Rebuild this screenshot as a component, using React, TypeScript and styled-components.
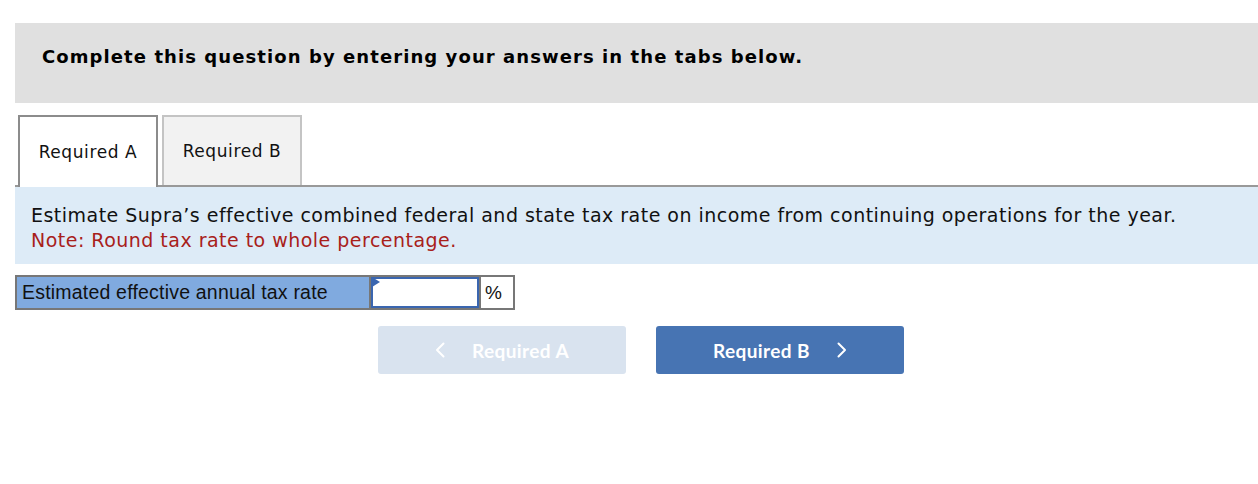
import React from "react";
import styled, { createGlobalStyle } from "styled-components";

const GlobalStyle = createGlobalStyle`
  body {
    margin: 0;
    background: #ffffff;
    font-family: "DejaVu Sans", Verdana, sans-serif;
  }
`;

const Page = styled.div`
  padding: 23px 0 0 15px;
  width: 1243px;
`;

const Banner = styled.div`
  background: #e0e0e0;
  height: 80px;
  box-sizing: border-box;
  padding: 22px 0 0 27px;
  line-height: 24px;
  font-weight: bold;
  font-size: 18px;
  letter-spacing: 1.08px;
  color: #000;
`;

const TabBar = styled.div`
  display: flex;
  gap: 4px;
  margin-top: 12px;
  padding-left: 3px;
  border-bottom: 2px solid #999;
`;

const Tab = styled.div<{ $active?: boolean }>`
  width: 140px;
  box-sizing: border-box;
  display: flex;
  align-items: center;
  justify-content: center;
  font-size: 17px;
  letter-spacing: 0.6px;
  color: #111;
  background: ${(p) => (p.$active ? "#ffffff" : "#f2f2f2")};
  border: 2px solid ${(p) => (p.$active ? "#8c8c8c" : "#c4c4c4")};
  border-bottom: none;
  margin-bottom: ${(p) => (p.$active ? "-2px" : "0")};
  height: ${(p) => (p.$active ? "72px" : "70px")};
`;

const Prompt = styled.div`
  background: #ddebf7;
  height: 77px;
  box-sizing: border-box;
  padding: 16px 16px 0;
  font-size: 19px;
  letter-spacing: 0.48px;
  line-height: 25px;
  color: #111;
  white-space: nowrap;
`;

const Note = styled.div`
  color: #a8201a;
`;

const AnswerRow = styled.div`
  display: flex;
  margin-top: 11px;
  width: 500px;
  height: 35px;
  box-sizing: border-box;
  border: 2px solid #777;
  font-family: "Liberation Sans", Arial, sans-serif;
`;

const Label = styled.div`
  width: 354px;
  flex: none;
  box-sizing: border-box;
  background: #80aadf;
  border-right: 2px solid #777;
  display: flex;
  align-items: center;
  padding-left: 5px;
  font-size: 19.5px;
  letter-spacing: 0.2px;
  color: #111;
  white-space: nowrap;
  overflow: hidden;
`;

const InputCell = styled.div`
  position: relative;
  width: 110px;
  flex: none;
  box-sizing: border-box;
  border-right: 2px solid #777;
  display: flex;
`;

const Input = styled.input`
  flex: 1;
  min-width: 0;
  border: 2px solid #3a66b0;
  outline: none;
  margin: 0;
  padding: 0 4px;
  background: #fff;
`;

const Flag = styled.span`
  position: absolute;
  top: 0;
  left: 1px;
  width: 0;
  height: 0;
  border-top: 5px solid transparent;
  border-bottom: 5px solid transparent;
  border-left: 8px solid #3a66b0;
`;

const Unit = styled.div`
  flex: 1;
  display: flex;
  align-items: center;
  padding-left: 4px;
  font-size: 19px;
  background: #fff;
  color: #111;
`;

const Nav = styled.div`
  display: flex;
  gap: 30px;
  margin: 16px 0 0 363px;
`;

const NavButton = styled.button<{ $disabled?: boolean }>`
  width: 248px;
  height: 48px;
  border: none;
  border-radius: 3px;
  background: ${(p) => (p.$disabled ? "#d9e3ef" : "#4774b3")};
  color: #fff;
  font-family: Lato, "Open Sans", sans-serif;
  font-weight: bold;
  font-size: 19px;
  letter-spacing: 0.4px;
  display: flex;
  align-items: center;
  justify-content: center;
  gap: 27px;
  cursor: ${(p) => (p.$disabled ? "default" : "pointer")};
  padding: 0;
`;

const Chevron = ({ dir }: { dir: "left" | "right" }) => (
  <svg width="10" height="16" viewBox="0 0 10 16" fill="none">
    <path
      d={dir === "left" ? "M8.5 1.5 L2 8 L8.5 14.5" : "M1.5 1.5 L8 8 L1.5 14.5"}
      stroke="#fff"
      strokeWidth="2"
      strokeLinecap="round"
      strokeLinejoin="round"
    />
  </svg>
);

export default function App() {
  return (
    <>
      <GlobalStyle />
      <Page>
        <Banner>Complete this question by entering your answers in the tabs below.</Banner>
        <TabBar>
          <Tab $active>Required A</Tab>
          <Tab>Required B</Tab>
        </TabBar>
        <Prompt>
          <div>
            Estimate Supra’s effective combined federal and state tax rate on income from
            continuing operations for the year.
          </div>
          <Note>Note: Round tax rate to whole percentage.</Note>
        </Prompt>
        <AnswerRow>
          <Label>Estimated effective annual tax rate</Label>
          <InputCell>
            <Flag />
            <Input type="text" />
          </InputCell>
          <Unit>%</Unit>
        </AnswerRow>
        <Nav>
          <NavButton $disabled disabled>
            <Chevron dir="left" />
            Required A
          </NavButton>
          <NavButton>
            Required B
            <Chevron dir="right" />
          </NavButton>
        </Nav>
      </Page>
    </>
  );
}
